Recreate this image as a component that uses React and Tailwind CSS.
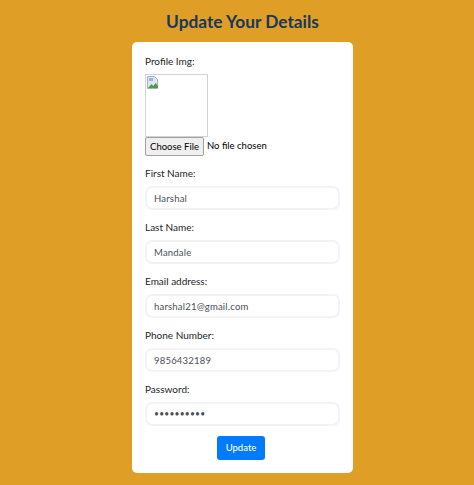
const F = "font-['Lato','Open_Sans',sans-serif]";

function Field({ label, value, type = "text" }) {
  const size = type === "password" ? "text-[8.5px]" : "text-[9.5px]";
  return (
    <div className="flex shrink-0 flex-col">
      <label className="h-[18px] text-[10px] leading-[18px] text-[#212529]">{label}</label>
      <input
        readOnly
        type={type}
        value={value}
        className={`mt-[4px] h-[24px] w-[195px] rounded-[7px] border-2 border-[#f2f3f4] bg-white px-[7px] ${size} leading-[20px] tracking-[0.2px] text-[#495057] outline-none`}
      />
    </div>
  );
}

function BrokenImage() {
  return (
    <svg width="12" height="14" viewBox="0 0 12 14" className="ml-px mt-px">
      <path d="M0.5 0.5h7l3 3v9h-10z" fill="#dfe6f0" stroke="#a8b0bc" strokeWidth="1" />
      <path d="M1 12l3.5-4 2 2 2-3 2.5 3v2H1z" fill="#4f9a45" />
      <path d="M2 2h4v3H2z" fill="#8fb4e8" />
    </svg>
  );
}

export default function App() {
  return (
    <div className={`${F} flex h-[485px] w-[474px] flex-col items-center overflow-hidden bg-[#df9f26] pl-[11px]`}>
      <h1 className="mt-[10px] h-[24px] shrink-0 text-[17.3px] font-bold leading-[24px] text-[#17375e]">Update Your Details</h1>
      <div className="mt-[8px] flex h-[431px] w-[221px] shrink-0 flex-col rounded-[5px] bg-white px-[13px] pt-[10px]">
        <div className="h-[18px] shrink-0 text-[10px] leading-[18px] text-[#212529]">Profile Img:</div>
        <div className="mt-[4px] h-[63px] w-[63px] shrink-0 border border-[#d3d3d3]">
          <BrokenImage />
        </div>
        <div className="flex h-[19px] shrink-0 items-center">
          <button className="h-[19px] w-[59px] shrink-0 whitespace-nowrap rounded-[2px] border border-[#a0a0a0] bg-[#efefef] text-[9.5px] leading-none text-black">Choose File</button>
          <span className="ml-[3px] whitespace-nowrap text-[9.5px] text-black">No file chosen</span>
        </div>
        <div className="mt-[8px] flex shrink-0 flex-col gap-[8px]">
          <Field label="First Name:" value="Harshal" />
          <Field label="Last Name:" value="Mandale" />
          <Field label="Email address:" value="harshal21@gmail.com" />
          <Field label="Phone Number:" value="9856432189" />
          <Field label="Password:" value="harshal123" type="password" />
        </div>
        <button className="ml-[72px] mt-[10px] h-[24px] w-[48px] shrink-0 rounded-[3px] bg-[#007bff] text-[9.5px] font-medium text-white">Update</button>
      </div>
    </div>
  );
}
